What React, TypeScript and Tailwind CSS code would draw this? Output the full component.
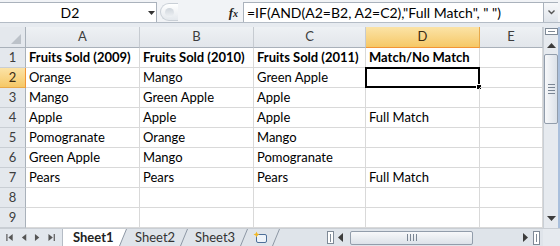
import React from "react";

const COLS = ["A", "B", "C", "D", "E"];

const ROWS: string[][] = [
  ["Fruits Sold (2009)", "Fruits Sold (2010)", "Fruits Sold (2011)", "Match/No Match", ""],
  ["Orange", "Mango", "Green Apple", "", ""],
  ["Mango", "Green Apple", "Apple", "", ""],
  ["Apple", "Apple", "Apple", "Full Match", ""],
  ["Pomogranate", "Orange", "Mango", "", ""],
  ["Green Apple", "Mango", "Pomogranate", "", ""],
  ["Pears", "Pears", "Pears", "Full Match", ""],
  ["", "", "", "", ""],
  ["", "", "", "", ""],
];

export default function App() {
  return (
    <div className="w-[560px] h-[246px] overflow-hidden flex flex-col bg-white font-['Lato',sans-serif] text-[13px] text-black select-none">
      <FormulaBar />
      <div className="flex h-[201px]">
        <Sheet />
        <VScroll />
      </div>
      <TabBar />
    </div>
  );
}

function FormulaBar() {
  return (
    <div className="h-[27px] flex flex-col bg-[#e7ebf0]">
      <div className="h-[23px] flex pt-[2px] bg-[#f1f3f6] border-b border-[#b4bcc6]">
        <div className="w-[157px] flex items-center bg-white border-t border-r border-[#aab2bc]">
          <div className="w-[140px] text-center text-[14px] leading-none">D2</div>
          <svg width="7" height="4" viewBox="0 0 7 4" className="ml-[8px]">
            <path d="M0 0h7L3.5 4z" fill="#333" />
          </svg>
        </div>
        <div className="ml-[3px] mt-[1px] w-[18px] h-[18px] rounded-l-full border border-r-0 border-[#c9cfd6] bg-gradient-to-b from-white to-[#e4e8ed] flex items-center pl-[4px]">
          <div className="w-[9px] h-[9px] rounded-full bg-gradient-to-b from-[#cfd5dc] to-[#eef1f4]" />
        </div>
        <div className="flex-1 flex items-center justify-end pr-[5px]">
          <span className="font-['Liberation_Serif',serif] italic font-bold text-[13px] leading-none text-[#222]">
            f<span className="text-[10px]">x</span>
          </span>
        </div>
        <div className="w-[300px] flex items-center pl-[3px] bg-white border-t border-l border-[#aab2bc] text-[14px] leading-none whitespace-pre">
          =IF(AND(A2=B2, A2=C2),"Full Match", " ")
        </div>
        <div className="w-[15px] flex items-center justify-center bg-gradient-to-b from-[#f7f8fa] to-[#dfe4ea] border-t border-l border-[#aab2bc]">
          <svg width="7" height="5" viewBox="0 0 7 5">
            <path d="M0.5 0.5L3.5 3.5L6.5 0.5" stroke="#555" strokeWidth="1.4" fill="none" />
          </svg>
        </div>
        <div className="w-[2px]" />
      </div>
    </div>
  );
}

function Sheet() {
  return (
    <div className="w-[543px] grid grid-cols-[26px_114px_114px_112px_114px_63px] grid-rows-[21px_repeat(9,20px)]">
      <div className="relative bg-[#e4e8ed] border-r border-b border-[#a9b1ba]">
        <svg width="10" height="10" viewBox="0 0 10 10" className="absolute right-[4px] bottom-[3px]">
          <path d="M10 0V10H0z" fill="#bcc2c9" />
        </svg>
      </div>
      {COLS.map((c) => (
        <div
          key={c}
          className={
            c === "D"
              ? "flex items-center justify-center bg-gradient-to-b from-[#fbe3a6] to-[#f6c865] border-r border-b border-r-[#e8a94a] border-b-[#f29436] text-[#3b2a12]"
              : "flex items-center justify-center bg-gradient-to-b from-[#eef1f4] to-[#e2e6eb] border-r border-b border-r-[#c6cbd1] border-b-[#a9b1ba] text-[#3d3d3d]"
          }
        >
          {c}
        </div>
      ))}
      {ROWS.map((row, i) => (
        <React.Fragment key={i}>
          <div
            className={
              i === 1
                ? "flex items-center justify-center bg-gradient-to-b from-[#fbe3a6] to-[#f6c865] border-r border-b border-r-[#f29436] border-b-[#e8a94a] text-[#3b2a12]"
                : "flex items-center justify-center bg-[#e4e8ed] border-r border-b border-r-[#a9b1ba] border-b-[#c9ced4] text-[#3d3d3d]"
            }
          >
            {i + 1}
          </div>
          {row.map((v, j) => (
            <div
              key={j}
              className={
                "relative flex items-center pl-[3px] whitespace-nowrap border-r border-b border-[#d9d9d9]" +
                (i === 0 ? " font-bold" : "")
              }
            >
              {v}
              {i === 1 && j === 3 && (
                <>
                  <div className="absolute -top-[1px] -left-[1px] w-[115px] h-[21px] border-2 border-black" />
                  <div className="absolute -right-[3px] -bottom-[3px] w-[6px] h-[6px] bg-black border border-white" />
                </>
              )}
            </div>
          ))}
        </React.Fragment>
      ))}
    </div>
  );
}

function VScroll() {
  return (
    <div className="w-[17px] flex bg-[#e6eaef]">
      <div className="w-[15px] flex flex-col items-center border-l border-[#c9cfd6]">
        <div className="mt-[1px] w-[13px] h-[7px] flex items-center justify-center bg-white border border-[#7f8a97]">
          <div className="w-[7px] h-[1px] bg-[#7f8a97]" />
        </div>
        <svg width="9" height="5" viewBox="0 0 9 5" className="mt-[8px]">
          <path d="M0 5L4.5 0L9 5z" fill="#3c3c3c" />
        </svg>
        <div className="mt-[6px] w-[14px] h-[70px] rounded-[2px] border border-[#929dab] bg-gradient-to-r from-[#f7f8fa] to-[#dce2e9] flex flex-col items-center justify-center gap-[2px]">
          <div className="w-[7px] h-[1px] bg-[#7a8593]" />
          <div className="w-[7px] h-[1px] bg-[#7a8593]" />
          <div className="w-[7px] h-[1px] bg-[#7a8593]" />
          <div className="w-[7px] h-[1px] bg-[#7a8593]" />
        </div>
        <div className="flex-1" />
        <svg width="9" height="5" viewBox="0 0 9 5" className="mb-[7px]">
          <path d="M0 0L4.5 5L9 0z" fill="#3c3c3c" />
        </svg>
      </div>
      <div className="w-[2px] bg-[#a9bfdc]" />
    </div>
  );
}

function Slant({ white }: { white?: boolean }) {
  return (
    <svg width="8" height="17" viewBox="0 0 8 17" className="shrink-0">
      {white && <path d="M0 0H7.5L0.5 17H0z" fill="#ffffff" />}
      <path d="M0.5 17L7.5 0" stroke="#8d97a4" strokeWidth="1" />
    </svg>
  );
}

function TabBar() {
  return (
    <div className="h-[18px] flex bg-[#dfe4ea] border-t border-[#c9ced4]">
      <div className="w-[63px] flex items-center border-r border-[#b5bcc5] bg-[#e2e7ed]">
        <svg width="60" height="9" viewBox="0 0 60 9" className="ml-[4px]">
          <path d="M3 1v7" stroke="#555" strokeWidth="1.2" />
          <path d="M9 1v7L4.5 4.5z" fill="#555" />
          <path d="M23 1v7L18.5 4.5z" fill="#555" />
          <path d="M32 1v7L36.5 4.5z" fill="#555" />
          <path d="M46 1v7L50.5 4.5z" fill="#555" />
          <path d="M52 1v7" stroke="#555" strokeWidth="1.2" />
        </svg>
      </div>
      <div className="w-[56px] flex items-center pl-[10px] bg-white font-bold text-[13px] text-[#222] leading-none">
        Sheet1
      </div>
      <Slant white />
      <div className="w-[53px] flex items-center pl-[8px] text-[13px] text-[#333] leading-none">Sheet2</div>
      <Slant />
      <div className="w-[52px] flex items-center pl-[7px] text-[13px] text-[#333] leading-none">Sheet3</div>
      <Slant />
      <div className="w-[24px] flex items-center pl-[5px]">
        <svg width="15" height="13" viewBox="0 0 15 13">
          <rect x="3.5" y="3.5" width="10" height="8" rx="1.5" fill="#eef3f9" stroke="#4d6f99" />
          <path d="M3.5 0.5L4.3 2.6L6.5 3.5L4.3 4.4L3.5 6.5L2.7 4.4L0.5 3.5L2.7 2.6z" fill="#f2b825" />
        </svg>
      </div>
      <Slant />
      <div className="w-[47px]" />
      <div className="w-[7px] my-[2px] flex items-center justify-center bg-white border border-[#7f8a97]">
        <div className="w-[1px] h-[8px] bg-[#7f8a97]" />
      </div>
      <div className="w-[209px] flex items-center pl-[4px]">
        <svg width="5" height="9" viewBox="0 0 5 9">
          <path d="M5 0V9L0 4.5z" fill="#3c3c3c" />
        </svg>
        <div className="ml-[7px] w-[123px] h-[14px] rounded-[2px] border border-[#929dab] bg-gradient-to-b from-[#f7f8fa] to-[#dce2e9] flex items-center justify-center gap-[2px]">
          <div className="w-[1px] h-[7px] bg-[#7a8593]" />
          <div className="w-[1px] h-[7px] bg-[#7a8593]" />
          <div className="w-[1px] h-[7px] bg-[#7a8593]" />
          <div className="w-[1px] h-[7px] bg-[#7a8593]" />
        </div>
        <svg width="5" height="9" viewBox="0 0 5 9" className="ml-[50px]">
          <path d="M0 0V9L5 4.5z" fill="#3c3c3c" />
        </svg>
        <div className="ml-[5px] w-[7px] h-[14px] flex items-center justify-center bg-white border border-[#7f8a97]">
          <div className="w-[1px] h-[8px] bg-[#7f8a97]" />
        </div>
      </div>
      <div className="flex-1 bg-[#e6eaef]" />
    </div>
  );
}
